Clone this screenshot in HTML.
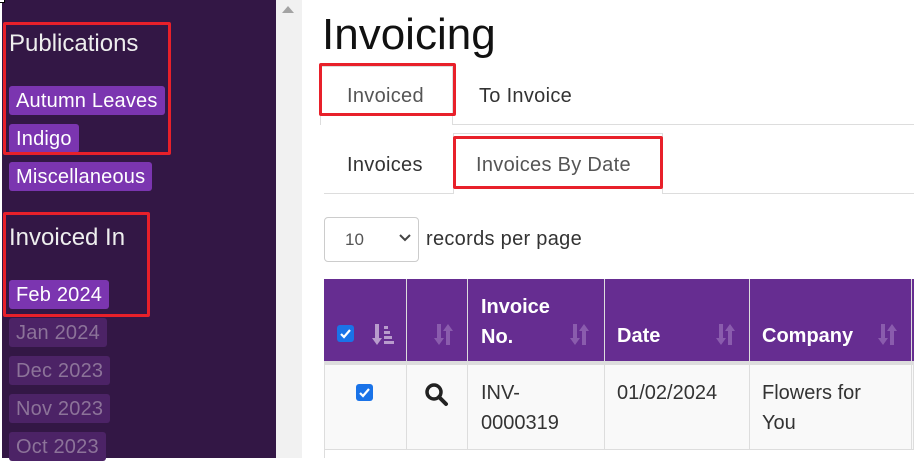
<!DOCTYPE html>
<html><head><meta charset="utf-8"><style>
*{margin:0;padding:0;box-sizing:border-box}
body{width:914px;height:458px;overflow:hidden;background:#fff;font-family:"Liberation Sans","DejaVu Sans",sans-serif;position:relative}
.a{position:absolute;white-space:nowrap}
.side{left:2px;top:0;width:274px;height:458px;background:#331745}
.sb{left:276px;top:0;width:26px;height:458px;background:#f1f1f1}
.h{color:#eee;font-size:24px}
.tag{position:absolute;left:9px;height:29px;border-radius:3px;background:#7b35b0;color:#fff;font-size:20px;line-height:31px;padding:0 7px;letter-spacing:0.2px}
.dim{background:#4c2366;color:#8c7399}
.red{position:absolute;border:3px solid #e8202a;border-radius:2px}
.tab{color:#555;font-size:20px;letter-spacing:0.3px}
</style></head><body>
<div class="a side"></div>
<div class="a sb"></div>
<div class="a" style="left:282px;top:6px;width:0;height:0;border-left:6px solid transparent;border-right:6px solid transparent;border-bottom:7px solid #a3a3a3"></div>
<div class="a" style="left:0;top:0;width:5px;height:3px;background:#fff;border:1px solid #000;border-top:none;border-left:none"></div>

<div class="a h" style="left:9px;top:30px">Publications</div>
<div class="tag" style="top:86px">Autumn Leaves</div>
<div class="tag" style="top:124px">Indigo</div>
<div class="tag" style="top:162px">Miscellaneous</div>
<div class="red" style="left:3px;top:22px;width:168px;height:133px"></div>
<div class="a h" style="left:9px;top:224px">Invoiced In</div>
<div class="tag" style="top:280px">Feb 2024</div>
<div class="tag dim" style="top:318px">Jan 2024</div>
<div class="tag dim" style="top:356px">Dec 2023</div>
<div class="tag dim" style="top:394px">Nov 2023</div>
<div class="tag dim" style="top:432px">Oct 2023</div>
<div class="red" style="left:3px;top:212px;width:147px;height:105px"></div>

<div class="a" style="left:322px;top:10px;font-size:44px;color:#111">Invoicing</div>
<div class="a" style="left:320px;top:124px;width:594px;height:1px;background:#ddd"></div>
<div class="a" style="left:320px;top:66px;width:133px;height:59px;background:#fff;border:1px solid #ddd;border-bottom:none"></div>
<div class="a tab" style="left:347px;top:85px">Invoiced</div>
<div class="a tab" style="left:479px;top:85px;color:#333">To Invoice</div>
<div class="red" style="left:319px;top:63px;width:137px;height:53px"></div>

<div class="a" style="left:324px;top:193px;width:590px;height:1px;background:#ddd"></div>
<div class="a" style="left:453px;top:133px;width:210px;height:61px;background:#fff;border:1px solid #ddd;border-bottom:none"></div>
<div class="a tab" style="left:347px;top:154px;color:#333">Invoices</div>
<div class="a tab" style="left:476px;top:154px">Invoices By Date</div>
<div class="red" style="left:453px;top:136px;width:210px;height:53px"></div>

<div class="a" style="left:324px;top:217px;width:95px;height:45px;border:1px solid #ccc;border-radius:4px"></div>
<div class="a" style="left:345px;top:230px;font-size:17px;color:#555">10</div>
<svg class="a" style="left:399px;top:234px" width="12" height="8"><path d="M1 1l5 5 5-5" fill="none" stroke="#444" stroke-width="2"/></svg>
<div class="a" style="left:426px;top:228px;font-size:20px;color:#333;letter-spacing:0.3px">records per page</div>

<div class="a" style="left:324px;top:279px;width:590px;height:84px;background:#662d91"></div>
<div class="a" style="left:324px;top:361px;width:590px;height:3px;background:#ddd"></div>
<div class="a" style="left:324px;top:364px;width:590px;height:86px;background:#f9f9f9;border:1px solid #ddd"></div>
<div class="a" style="left:324px;top:450px;width:590px;height:8px;border-left:1px solid #ddd"></div>
<div class="a" style="left:406px;top:279px;width:1px;height:171px;background:#ddd"></div>
<div class="a" style="left:467px;top:279px;width:1px;height:171px;background:#ddd"></div>
<div class="a" style="left:604px;top:279px;width:1px;height:171px;background:#ddd"></div>
<div class="a" style="left:749px;top:279px;width:1px;height:171px;background:#ddd"></div>
<div class="a" style="left:911px;top:279px;width:1px;height:171px;background:#ddd"></div>

<div class="a" style="left:337px;top:325px;width:17px;height:17px;background:#1a73e8;border-radius:3px"></div>
<svg class="a" style="left:339px;top:328px" width="13" height="11"><path d="M2 6l3 3 6-7" fill="none" stroke="#fff" stroke-width="2.2"/></svg>
<svg class="a" style="left:372px;top:324px" width="24" height="22"><g fill="#b89ccc"><path d="M3 0h4v14h3l-5 7-5-7h3z"/><rect x="12" y="2" width="4" height="3"/><rect x="12" y="7" width="6" height="3"/><rect x="12" y="12" width="8" height="3"/><rect x="12" y="17" width="10" height="3"/></g></svg>
<svg class="a" style="left:434px;top:324px" width="20" height="22"><g fill="#8a5cad"><path d="M3 0h4v14h3l-5 7-5-7h3z"/><path d="M12 21h4V7h3l-5-7-5 7h3z"/></g></svg>
<div class="a" style="left:481px;top:292px;color:#fff;font-size:20px;font-weight:bold;line-height:30px">Invoice<br>No.</div>
<svg class="a" style="left:570px;top:324px" width="20" height="22"><g fill="#8a5cad"><path d="M3 0h4v14h3l-5 7-5-7h3z"/><path d="M12 21h4V7h3l-5-7-5 7h3z"/></g></svg>
<div class="a" style="left:617px;top:325px;color:#fff;font-size:20px;font-weight:bold">Date</div>
<svg class="a" style="left:716px;top:324px" width="20" height="22"><g fill="#8a5cad"><path d="M3 0h4v14h3l-5 7-5-7h3z"/><path d="M12 21h4V7h3l-5-7-5 7h3z"/></g></svg>
<div class="a" style="left:762px;top:325px;color:#fff;font-size:20px;font-weight:bold">Company</div>
<svg class="a" style="left:878px;top:324px" width="20" height="22"><g fill="#8a5cad"><path d="M3 0h4v14h3l-5 7-5-7h3z"/><path d="M12 21h4V7h3l-5-7-5 7h3z"/></g></svg>

<div class="a" style="left:356px;top:384px;width:17px;height:17px;background:#1a73e8;border-radius:3px"></div>
<svg class="a" style="left:358px;top:387px" width="13" height="11"><path d="M2 6l3 3 6-7" fill="none" stroke="#fff" stroke-width="2.2"/></svg>
<svg class="a" style="left:424px;top:382px" width="26" height="26"><circle cx="10" cy="10" r="7" fill="none" stroke="#222" stroke-width="3.5"/><path d="M15 15l7 7" stroke="#222" stroke-width="4" stroke-linecap="round"/></svg>
<div class="a" style="left:481px;top:378px;font-size:20px;color:#333;line-height:30px">INV-<br>0000319</div>
<div class="a" style="left:617px;top:378px;font-size:20px;color:#333;line-height:30px">01/02/2024</div>
<div class="a" style="left:762px;top:378px;font-size:20px;color:#333;line-height:30px">Flowers for<br>You</div>
</body></html>
